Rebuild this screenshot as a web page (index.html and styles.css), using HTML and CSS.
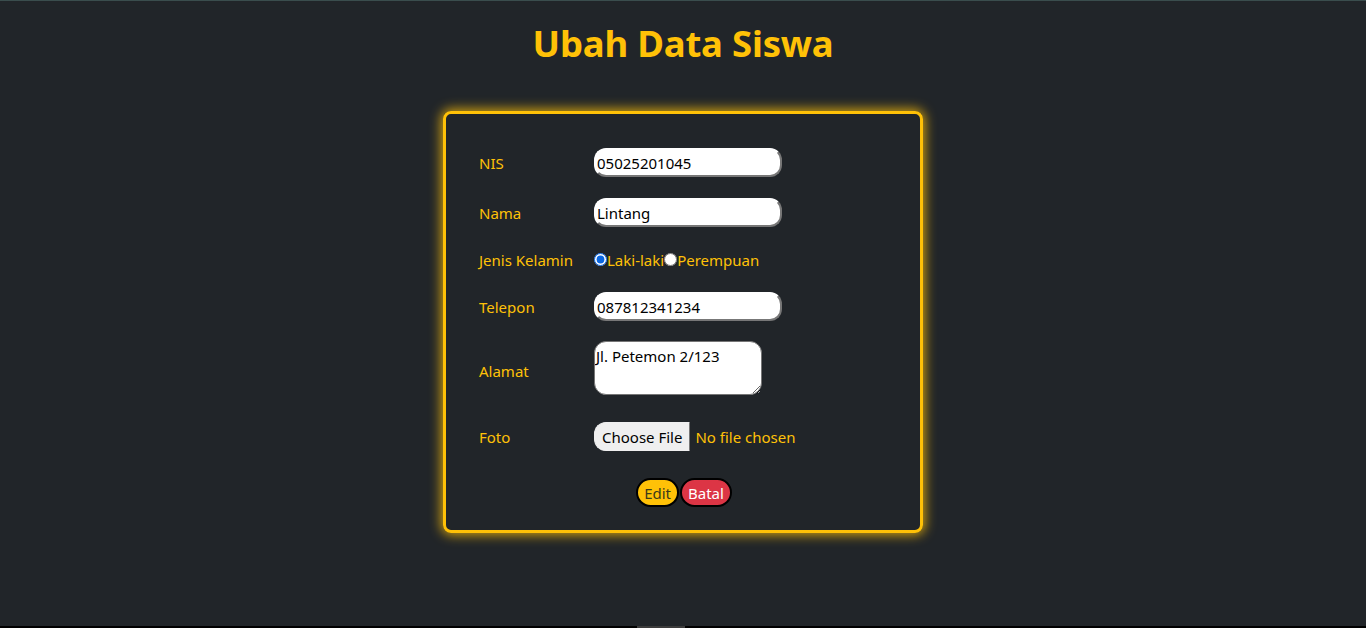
FILE: index.html
```html
<!DOCTYPE html>
<html lang="id">
<head>
<meta charset="utf-8">
<title>Ubah Data Siswa</title>
<link rel="stylesheet" href="styles.css">
</head>
<body>
<main class="page">
  <h1 class="title">Ubah Data Siswa</h1>
  <form class="card">
    <div class="row">
      <label class="label" for="nis">NIS</label>
      <input class="field" id="nis" type="text" value="05025201045">
    </div>
    <div class="row">
      <label class="label" for="nama">Nama</label>
      <input class="field" id="nama" type="text" value="Lintang">
    </div>
    <div class="row row-radio">
      <span class="label">Jenis Kelamin</span>
      <span class="radios">
        <input class="radio" type="radio" name="jk" id="lk" checked><label for="lk">Laki-laki</label><input class="radio" type="radio" name="jk" id="pr"><label for="pr">Perempuan</label>
      </span>
    </div>
    <div class="row">
      <label class="label" for="telp">Telepon</label>
      <input class="field" id="telp" type="text" value="087812341234">
    </div>
    <div class="row row-area">
      <label class="label label-area" for="alamat">Alamat</label>
      <textarea class="area" id="alamat">Jl. Petemon 2/123</textarea>
    </div>
    <div class="row row-file">
      <span class="label">Foto</span>
      <span class="file">
        <span class="file-btn">Choose File</span>
        <span class="file-name">No file chosen</span>
      </span>
    </div>
    <div class="actions">
      <button type="button" class="btn btn-edit">Edit</button><button type="button" class="btn btn-batal">Batal</button>
    </div>
  </form>
</main>
<div class="bottom-bar"><span class="bottom-thumb"></span></div>
</body>
</html>
```
FILE: styles.css
```css
* { box-sizing: border-box; }
html, body { height: 100%; }
body {
  margin: 0;
  background: #212529;
  border-top: 1px solid #3a4d4d;
  font-family: "Noto Sans", "Open Sans", sans-serif;
  color: #ffc107;
  display: flex;
  flex-direction: column;
}
.page {
  flex: 1;
  display: flex;
  flex-direction: column;
  align-items: center;
}
.title {
  margin: 18px 0 0;
  font-size: 36.5px;
  font-weight: 700;
  line-height: 48px;
  color: #ffc107;
  letter-spacing: -0.2px;
}
.card {
  margin-top: 44px;
  width: 480px;
  border: 3px solid #ffc107;
  border-radius: 8px;
  box-shadow: 0 0 12px 2px rgba(255, 193, 7, 0.8);
  padding: 34px 31px 23px 33px;
  display: flex;
  flex-direction: column;
  font-size: 15px;
}
.row {
  display: flex;
  align-items: center;
  height: 29px;
  margin-bottom: 21px;
}
.label {
  width: 115px;
  flex: none;
  color: #ffc107;
}
.field {
  width: 188px;
  height: 29px;
  border: 2px solid;
  border-color: #ffffff #777777 #777777 #ffffff;
  border-radius: 12px;
  background: #fff;
  font: inherit;
  font-size: 15px;
  color: #000;
  padding: 0 1px;
  outline: none;
}
.row-radio { height: 23px; margin-bottom: 21px; }
.radios { display: flex; align-items: center; }
.radio {
  margin: 0;
  width: 13px;
  height: 13px;
  accent-color: #0a66e0;
}
.row-area { height: 54px; margin-bottom: 27px; margin-top: -1px; }
.label-area { padding-top: 6px; }
.area {
  width: 168px;
  height: 54px;
  border: 1px solid #767676;
  border-radius: 12px;
  background: #fff;
  font: inherit;
  font-size: 15px;
  color: #000;
  padding: 4px 1px;
  resize: both;
  outline: none;
}
.row-file { margin-bottom: 27px; }
.file { display: flex; align-items: center; }
.file-btn {
  height: 29px;
  display: flex;
  align-items: center;
  padding: 0 7px;
  background: #efefef;
  color: #000;
  border: 1px solid #767676;
  border-color: #efefef #767676 #efefef #efefef;
  border-radius: 12px 0 0 12px;
}
.file-name { margin-left: 5px; }
.actions {
  display: flex;
  justify-content: center;
  height: 29px;
}
.btn {
  height: 29px;
  border: 2px solid #000;
  border-radius: 15px;
  font: inherit;
  font-size: 15px;
  padding: 0 6px;
  margin: 0;
  cursor: pointer;
}
.btn-edit { background: #ffc107; color: #3a3a1a; }
.btn-batal { background: #dc3545; color: #fff; margin-left: 1px; }
.bottom-bar {
  height: 2px;
  background: #000;
  display: flex;
  flex: none;
}
.bottom-thumb {
  width: 48px;
  height: 2px;
  margin-left: 637px;
  background: #3c3c3c;
}
```
